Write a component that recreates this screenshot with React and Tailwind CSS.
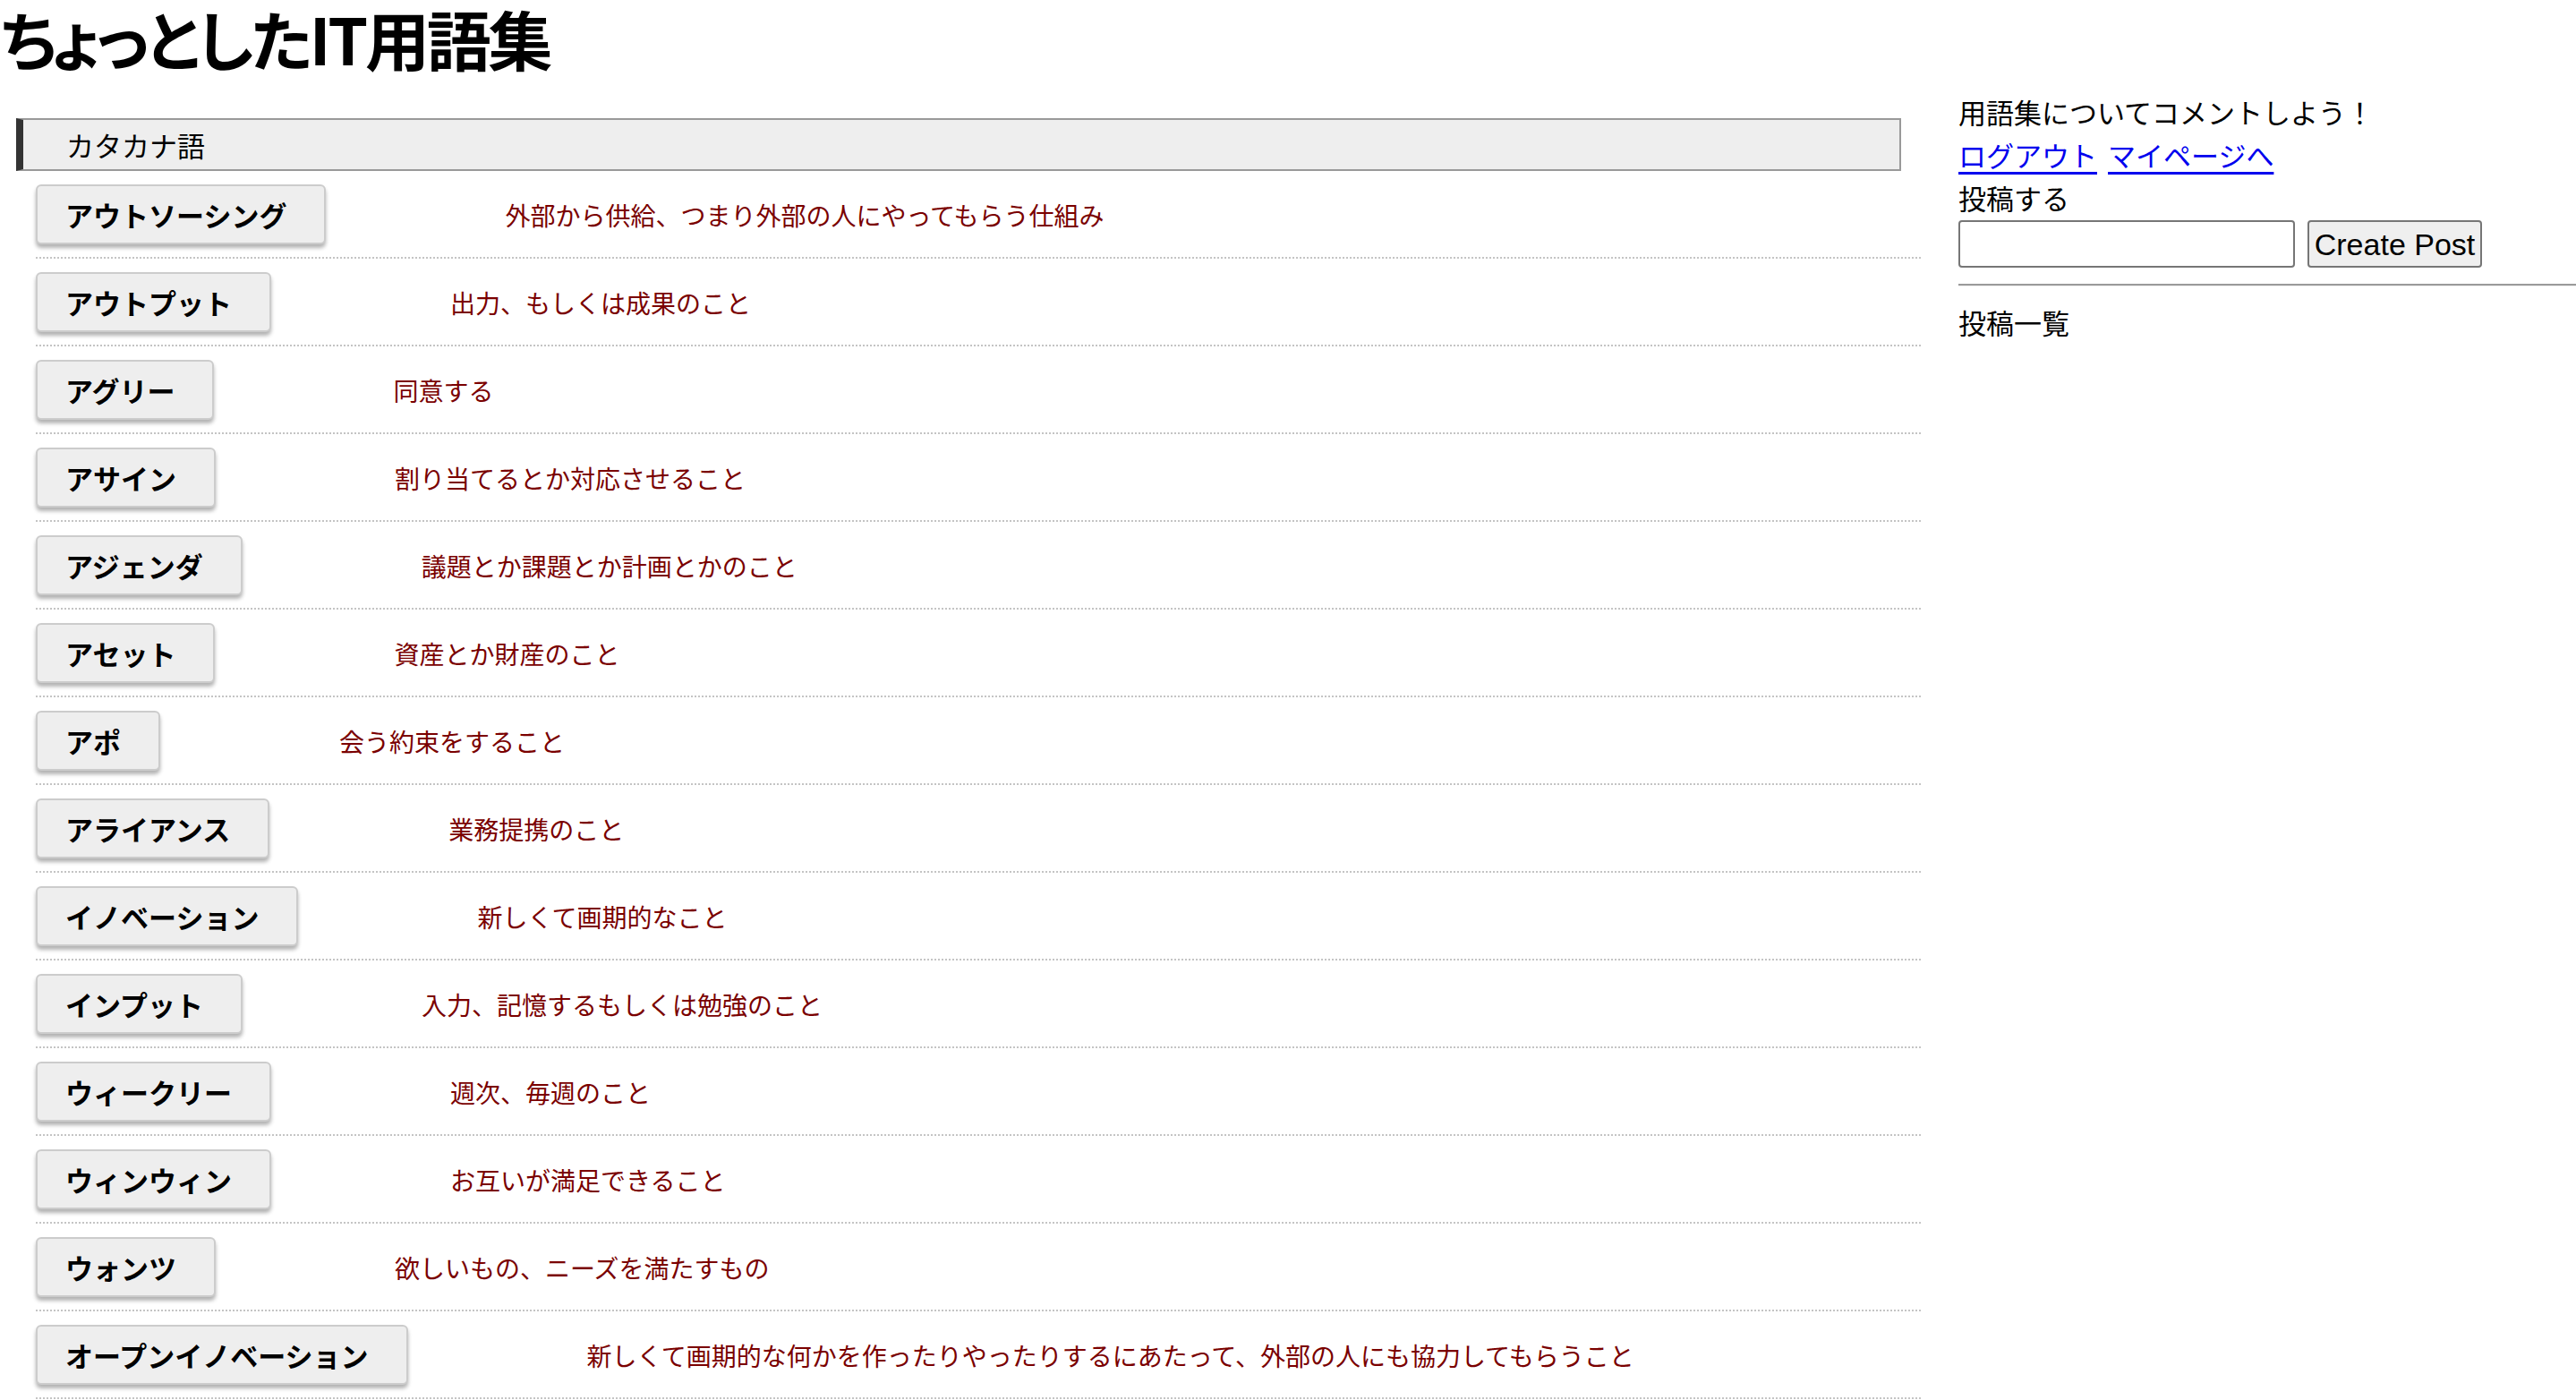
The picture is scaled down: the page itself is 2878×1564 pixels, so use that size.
const items = [
  ["アウトソーシング", "外部から供給、つまり外部の人にやってもらう仕組み"],
  ["アウトプット", "出力、もしくは成果のこと"],
  ["アグリー", "同意する"],
  ["アサイン", "割り当てるとか対応させること"],
  ["アジェンダ", "議題とか課題とか計画とかのこと"],
  ["アセット", "資産とか財産のこと"],
  ["アポ", "会う約束をすること"],
  ["アライアンス", "業務提携のこと"],
  ["イノベーション", "新しくて画期的なこと"],
  ["インプット", "入力、記憶するもしくは勉強のこと"],
  ["ウィークリー", "週次、毎週のこと"],
  ["ウィンウィン", "お互いが満足できること"],
  ["ウォンツ", "欲しいもの、ニーズを満たすもの"],
  ["オープンイノベーション", "新しくて画期的な何かを作ったりやったりするにあたって、外部の人にも協力してもらうこと"],
];

export default function App() {
  return (
    <div className="min-h-screen bg-white text-black font-['Noto_Sans_CJK_JP',sans-serif]">
      <h1 className="m-0 h-[88px] pl-[1px] text-[72px] font-bold leading-[84px] tracking-[-0.045em] [font-feature-settings:'palt']">
        ちょっとしたIT用語集
      </h1>
      <div className="flex">
        <div className="w-[2146px] shrink-0 pl-[18px] pt-[44px]">
          <div className="flex h-[59px] w-[2106px] items-center border-y-2 border-r-2 border-l-[8px] border-y-[#999999] border-r-[#999999] border-l-[#333333] bg-[#eeeeee] pl-[48px] text-[31px] leading-none">
            カタカナ語
          </div>
          <ul className="ml-[22px] w-[2106px]">
            {items.map(([t, d]) => (
              <li
                key={t}
                className="flex items-center border-b-[2px] border-dotted border-[#c4c4c4] pt-[15px] pb-[14px]"
              >
                <span className="flex h-[67px] shrink-0 items-center rounded-[6px] border-2 border-[#cccccc] bg-[#eeeeee] pl-[31px] pr-[42px] text-[31px] font-bold leading-none shadow-[0_4px_4px_rgba(0,0,0,0.3)]">
                  {t}
                </span>
                <span className="ml-[200px] text-[28px] leading-none text-[#7a0000]">{d}</span>
              </li>
            ))}
          </ul>
        </div>
        <div className="flex-1 pl-[42px] pt-[13px] text-[31px] leading-[48px]">
          <p>用語集についてコメントしよう！</p>
          <p>
            <a href="#" className="text-[#0000ee] underline underline-offset-[6px]">ログアウト</a>
            <a href="#" className="ml-[12px] text-[#0000ee] underline underline-offset-[6px]">マイページへ</a>
          </p>
          <p>投稿する</p>
          <div className="mt-[1px] flex items-center gap-[14px]">
            <input
              type="text"
              className="h-[53px] w-[376px] rounded-[4px] border-2 border-[#767676] bg-white"
            />
            <button className="h-[53px] w-[195px] rounded-[4px] border-2 border-[#767676] bg-[#efefef] font-['Liberation_Sans',sans-serif] text-[34px] leading-none text-black">
              Create Post
            </button>
          </div>
          <div className="mt-[18px] h-[3px] border-t-2 border-b border-t-[#9a9a9a] border-b-[#eeeeee]"></div>
          <p className="mt-[16px]">投稿一覧</p>
        </div>
      </div>
    </div>
  );
}
